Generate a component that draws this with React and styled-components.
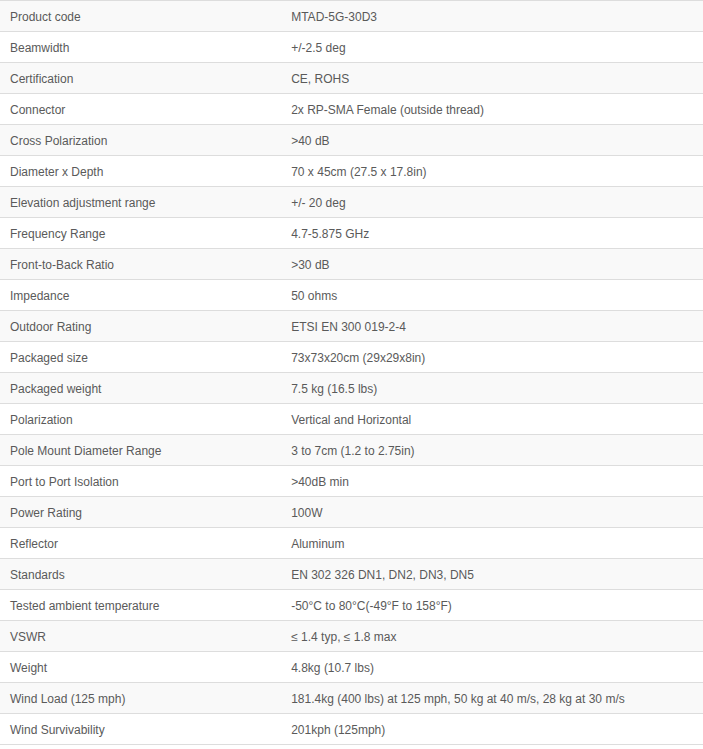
import styled, { createGlobalStyle } from 'styled-components';

const specs = [
  ['Product code', 'MTAD-5G-30D3'],
  ['Beamwidth', '+/-2.5 deg'],
  ['Certification', 'CE, ROHS'],
  ['Connector', '2x RP-SMA Female (outside thread)'],
  ['Cross Polarization', '>40 dB'],
  ['Diameter x Depth', '70 x 45cm (27.5 x 17.8in)'],
  ['Elevation adjustment range', '+/- 20 deg'],
  ['Frequency Range', '4.7-5.875 GHz'],
  ['Front-to-Back Ratio', '>30 dB'],
  ['Impedance', '50 ohms'],
  ['Outdoor Rating', 'ETSI EN 300 019-2-4'],
  ['Packaged size', '73x73x20cm (29x29x8in)'],
  ['Packaged weight', '7.5 kg (16.5 lbs)'],
  ['Polarization', 'Vertical and Horizontal'],
  ['Pole Mount Diameter Range', '3 to 7cm (1.2 to 2.75in)'],
  ['Port to Port Isolation', '>40dB min'],
  ['Power Rating', '100W'],
  ['Reflector', 'Aluminum'],
  ['Standards', 'EN 302 326 DN1, DN2, DN3, DN5'],
  ['Tested ambient temperature', '-50°C to 80°C(-49°F to 158°F)'],
  ['VSWR', '≤ 1.4 typ, ≤ 1.8 max'],
  ['Weight', '4.8kg (10.7 lbs)'],
  ['Wind Load (125 mph)', '181.4kg (400 lbs) at 125 mph, 50 kg at 40 m/s, 28 kg at 30 m/s'],
  ['Wind Survivability', '201kph (125mph)'],
];

const GlobalStyle = createGlobalStyle`
  body {
    margin: 0;
    background: #fff;
    font-family: "Liberation Sans", Arial, sans-serif;
  }
`;

const SpecTable = styled.table`
  width: 703px;
  border-collapse: collapse;
  font-size: 12px;
  color: #5a5a5a;
`;

const Row = styled.tr`
  background: ${({ $striped }) => ($striped ? '#f9f9f9' : '#fff')};
`;

const Cell = styled.td`
  height: 28px;
  padding: 2px 10px 0;
  border-top: 1px solid #ddd;
  border-bottom: 1px solid #ddd;
  vertical-align: middle;
  width: ${({ $label }) => ($label ? '40%' : 'auto')};
`;

const App = () => (
  <>
    <GlobalStyle />
    <SpecTable>
      <tbody>
        {specs.map(([name, value], i) => (
          <Row key={name} $striped={i % 2 === 0}>
            <Cell $label>{name}</Cell>
            <Cell>{value}</Cell>
          </Row>
        ))}
      </tbody>
    </SpecTable>
  </>
);

export default App;
